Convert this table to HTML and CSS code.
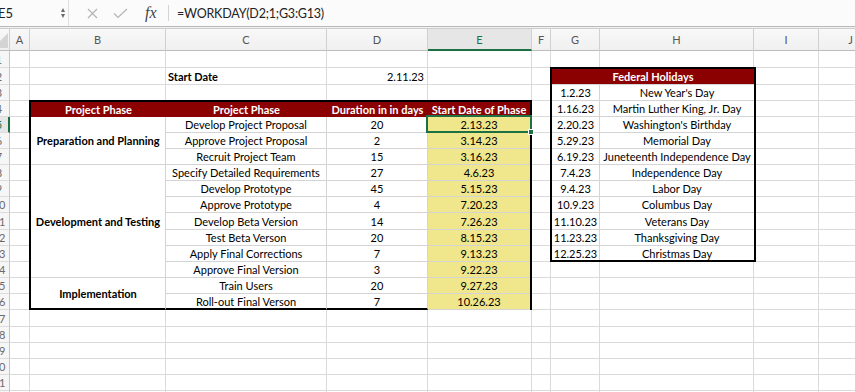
FILE: index.html
```html
<!DOCTYPE html>
<html>
<head>
<meta charset="utf-8">
<title>Workday</title>
<link rel="stylesheet" href="styles.css">
</head>
<body>
<div class="fbar">
  <div class="namebox">
    <span class="nb-text">E5</span>
    <span class="nb-arrows"><i class="up"></i><i class="down"></i></span>
  </div>
  <div class="xbtn"><svg width="11" height="11" viewBox="0 0 11 11"><path d="M1 1L10 10M10 1L1 10" stroke="#b4b4b4" stroke-width="1.2" fill="none"/></svg></div>
  <div class="okbtn"><svg width="15" height="11" viewBox="0 0 15 11"><path d="M1 5.5L5 9.5L14 1" stroke="#b4b4b4" stroke-width="1.2" fill="none"/></svg></div>
  <div class="fx">fx</div>
  <div class="fdiv"></div>
  <div class="formula">=WORKDAY(D2;1;G3:G13)</div>
</div>
<div class="spacer"></div>
<div class="sheet">
  <div class="ch corner"><svg width="9" height="21" viewBox="0 0 9 21"><polygon points="-7,19 8,4 8,19" fill="#d4d4d4"/></svg></div>
  <div class="ch">A</div><div class="ch">B</div><div class="ch">C</div><div class="ch">D</div><div class="ch sel">E</div><div class="ch">F</div><div class="ch">G</div><div class="ch">H</div><div class="ch">I</div><div class="ch">J</div>

  <div class="rh"><span>1</span></div><div class="c"></div><div class="c"></div><div class="c"></div><div class="c"></div><div class="c"></div><div class="c"></div><div class="c"></div><div class="c"></div><div class="c"></div><div class="c"></div>

  <div class="rh"><span>2</span></div><div class="c"></div><div class="c"></div><div class="c lbl">Start Date</div><div class="c num">2.11.23</div><div class="c"></div><div class="c"></div><div class="c"></div><div class="c"></div>

  <div class="rh"><span>3</span></div><div class="c"></div><div class="c"></div><div class="c"></div><div class="c"></div><div class="c"></div><div class="c"></div><div class="c"></div><div class="c"></div>

  <div class="rh"><span>4</span></div><div class="c"></div><div class="c"></div><div class="c"></div><div class="c"></div>
  <div class="rh sel"><span>5</span></div><div class="c"></div><div class="c"></div><div class="c"></div><div class="c"></div>
  <div class="rh"><span>6</span></div><div class="c"></div><div class="c"></div><div class="c"></div><div class="c"></div>
  <div class="rh"><span>7</span></div><div class="c"></div><div class="c"></div><div class="c"></div><div class="c"></div>
  <div class="rh"><span>8</span></div><div class="c"></div><div class="c"></div><div class="c"></div><div class="c"></div>
  <div class="rh"><span>9</span></div><div class="c"></div><div class="c"></div><div class="c"></div><div class="c"></div>
  <div class="rh"><span>10</span></div><div class="c"></div><div class="c"></div><div class="c"></div><div class="c"></div>
  <div class="rh"><span>11</span></div><div class="c"></div><div class="c"></div><div class="c"></div><div class="c"></div>
  <div class="rh"><span>12</span></div><div class="c"></div><div class="c"></div><div class="c"></div><div class="c"></div>
  <div class="rh"><span>13</span></div><div class="c"></div><div class="c"></div><div class="c"></div><div class="c"></div>

  <div class="rh"><span>14</span></div><div class="c"></div><div class="c"></div><div class="c"></div><div class="c"></div><div class="c"></div><div class="c"></div>
  <div class="rh"><span>15</span></div><div class="c"></div><div class="c"></div><div class="c"></div><div class="c"></div><div class="c"></div><div class="c"></div>
  <div class="rh"><span>16</span></div><div class="c"></div><div class="c"></div><div class="c"></div><div class="c"></div><div class="c"></div><div class="c"></div>

  <div class="rh"><span>17</span></div><div class="c"></div><div class="c"></div><div class="c"></div><div class="c"></div><div class="c"></div><div class="c"></div><div class="c"></div><div class="c"></div><div class="c"></div><div class="c"></div>
  <div class="rh"><span>18</span></div><div class="c"></div><div class="c"></div><div class="c"></div><div class="c"></div><div class="c"></div><div class="c"></div><div class="c"></div><div class="c"></div><div class="c"></div><div class="c"></div>
  <div class="rh"><span>19</span></div><div class="c"></div><div class="c"></div><div class="c"></div><div class="c"></div><div class="c"></div><div class="c"></div><div class="c"></div><div class="c"></div><div class="c"></div><div class="c"></div>
  <div class="rh"><span>20</span></div><div class="c"></div><div class="c"></div><div class="c"></div><div class="c"></div><div class="c"></div><div class="c"></div><div class="c"></div><div class="c"></div><div class="c"></div><div class="c"></div>
  <div class="rh"><span>21</span></div><div class="c"></div><div class="c"></div><div class="c"></div><div class="c"></div><div class="c"></div><div class="c"></div><div class="c"></div><div class="c"></div><div class="c"></div><div class="c"></div>
  <div class="rh"><span>22</span></div><div class="c"></div><div class="c"></div><div class="c"></div><div class="c"></div><div class="c"></div><div class="c"></div><div class="c"></div><div class="c"></div><div class="c"></div><div class="c"></div>

  <div class="tbl main">
    <div class="t hd">Project Phase</div><div class="t hd">Project Phase</div><div class="t hd">Duration in in days</div><div class="t hd nr">Start Date of Phase</div>
    <div class="t b s3">Preparation and Planning</div><div class="t">Develop Project Proposal</div><div class="t">20</div><div class="t y nr cur">2.13.23<div class="selbox"><i class="handle"></i></div></div>
    <div class="t">Approve Project Proposal</div><div class="t">2</div><div class="t y nr">3.14.23</div>
    <div class="t">Recruit Project Team</div><div class="t">15</div><div class="t y nr">3.16.23</div>
    <div class="t b s7">Development and Testing</div><div class="t">Specify Detailed Requirements</div><div class="t">27</div><div class="t y nr">4.6.23</div>
    <div class="t">Develop Prototype</div><div class="t">45</div><div class="t y nr">5.15.23</div>
    <div class="t">Approve Prototype</div><div class="t">4</div><div class="t y nr">7.20.23</div>
    <div class="t">Develop Beta Version</div><div class="t">14</div><div class="t y nr">7.26.23</div>
    <div class="t">Test Beta Verson</div><div class="t">20</div><div class="t y nr">8.15.23</div>
    <div class="t">Apply Final Corrections</div><div class="t">7</div><div class="t y nr">9.13.23</div>
    <div class="t">Approve Final Version</div><div class="t">3</div><div class="t y nr">9.22.23</div>
    <div class="t b s2 lastb">Implementation</div><div class="t">Train Users</div><div class="t">20</div><div class="t y nr">9.27.23</div>
    <div class="t lastb">Roll-out Final Verson</div><div class="t lastb">7</div><div class="t y nr">10.26.23</div>
  </div>

  <div class="tbl hol">
    <div class="t hd">Federal Holidays</div>
    <div class="t">1.2.23</div><div class="t nr">New Year's Day</div>
    <div class="t">1.16.23</div><div class="t nr">Martin Luther King, Jr. Day</div>
    <div class="t">2.20.23</div><div class="t nr">Washington's Birthday</div>
    <div class="t">5.29.23</div><div class="t nr">Memorial Day</div>
    <div class="t">6.19.23</div><div class="t nr">Juneteenth Independence Day</div>
    <div class="t">7.4.23</div><div class="t nr">Independence Day</div>
    <div class="t">9.4.23</div><div class="t nr">Labor Day</div>
    <div class="t">10.9.23</div><div class="t nr">Columbus Day</div>
    <div class="t">11.10.23</div><div class="t nr">Veterans Day</div>
    <div class="t">11.23.23</div><div class="t nr">Thanksgiving Day</div>
    <div class="t nb">12.25.23</div><div class="t nr nb">Christmas Day</div>
  </div>
</div>
</body>
</html>
```

FILE: styles.css
```css
* { box-sizing: border-box; margin: 0; padding: 0; }
html, body { width: 855px; height: 392px; overflow: hidden; background: #fff; }
body { font-family: Lato, "Liberation Sans", sans-serif; color: #000; }

/* formula bar */
.fbar { height: 27px; display: flex; align-items: center; background: #fbfbfb; border-bottom: 1px solid #b8b8b8; }
.namebox { width: 69px; height: 26px; flex: none; display: flex; align-items: center; justify-content: space-between; border-right: 1px solid #e0e0e0; padding-right: 2px; }
.nb-text { font-size: 13px; margin-left: -2px; color: #222; }
.nb-arrows { display: flex; flex-direction: column; gap: 2px; width: 5px; }
.up { display: block; width: 0; height: 0; border-left: 2.5px solid transparent; border-right: 2.5px solid transparent; border-bottom: 4px solid #6a6a6a; }
.down { display: block; width: 0; height: 0; border-left: 2.5px solid transparent; border-right: 2.5px solid transparent; border-top: 4px solid #6a6a6a; }
.xbtn { margin-left: 18px; width: 11px; height: 11px; display: flex; }
.okbtn { margin-left: 15px; width: 15px; height: 11px; display: flex; }
.fx { margin-left: 17px; width: 16px; font-family: "Liberation Serif", serif; font-style: italic; font-size: 16px; color: #444; line-height: 16px; }
.fdiv { margin-left: 7px; width: 1px; height: 16px; background: #d4d4d4; }
.formula { margin-left: 8px; font-size: 12.5px; letter-spacing: -0.2px; color: #222; white-space: nowrap; }
.spacer { height: 1px; background: #f2f2f2; }

/* sheet grid */
.sheet {
  display: grid;
  width: 883px;
  grid-template-columns: 10px 20px 136px 161px 101px 104px 19px 49px 154px 65px 64px;
  grid-template-rows: 23px 17px 17px 16px 16px 16px 16px 16px 16px 16px 16px 17px 16px 16px 16px 16px 16px 17px 16px 16px 16px 16px 16px;
}
.ch { background: linear-gradient(#f8f8f8, #f0f0f0); border-top: 1px solid #cdcdcd; border-right: 1px solid #d0d0d0; border-bottom: 1px solid #bdbdbd; font-size: 11px; color: #555; display: flex; align-items: center; justify-content: center; }
.ch.corner { align-items: flex-end; justify-content: flex-start; overflow: hidden; }
.ch.corner svg { display: block; }
.ch.sel { background: #e6e6e6; color: #1d7044; border-bottom: 2px solid #1d7044; }
.rh { background: #f6f6f6; border-right: 1px solid #c6c6c6; border-bottom: 1px solid #dcdcdc; overflow: hidden; font-size: 11px; color: #6a6a6a; display: flex; align-items: center; }
.rh span { flex: none; width: 20px; margin-left: -11px; text-align: center; }
.rh.sel { background: #e6e6e6; border-right: 2px solid #1d7044; color: #1d7044; }
.c { border-right: 1px solid #dadada; border-bottom: 1px solid #dadada; font-size: 11px; display: flex; align-items: center; white-space: nowrap; }
.lbl { font-weight: 700; padding-left: 2px; }
.num { justify-content: flex-end; padding-right: 3px; }

/* tables */
.tbl { display: grid; border: 2px solid #000; }
.main {
  grid-column: 3 / 7; grid-row: 5 / 18;
  margin: -1px 0 0 -1px; border-bottom: 0;
  grid-template-columns: 135px 161px 101px 102px;
  grid-template-rows: 15px repeat(6, 16px) 17px repeat(5, 16px);
}
.hol {
  grid-column: 8 / 10; grid-row: 3 / 15;
  margin: -1px -2px 0 -1px;
  grid-template-columns: 48px 154px;
  grid-template-rows: 16px repeat(8, 16px) 17px 16px 14px;
}
.t { display: flex; align-items: center; justify-content: center; border-right: 1px solid #d4d4d4; border-bottom: 1px solid #d4d4d4; font-size: 11px; white-space: nowrap; }
.hd { background: #8b0000; color: #fff; font-weight: 700; border: 0; }
.hol .hd { grid-column: span 2; border-bottom: 1px solid #d4d4d4; }
.nr { border-right: 0; }
.nb { border-bottom: 0; }
.y { background: #f0e68c; }
.b { font-weight: 700; }
.s2 { grid-row: span 2; }
.s3 { grid-row: span 3; }
.s7 { grid-row: span 7; }
.lastb { border-bottom: 2px solid #000; }
.cur { position: relative; }
.selbox { position: absolute; left: -2px; top: -2px; right: -2px; bottom: -1px; border: 2px solid #1d7044; }
.handle { position: absolute; right: -4px; bottom: -4px; width: 6px; height: 6px; background: #1d7044; border: 1px solid #fff; }
```
